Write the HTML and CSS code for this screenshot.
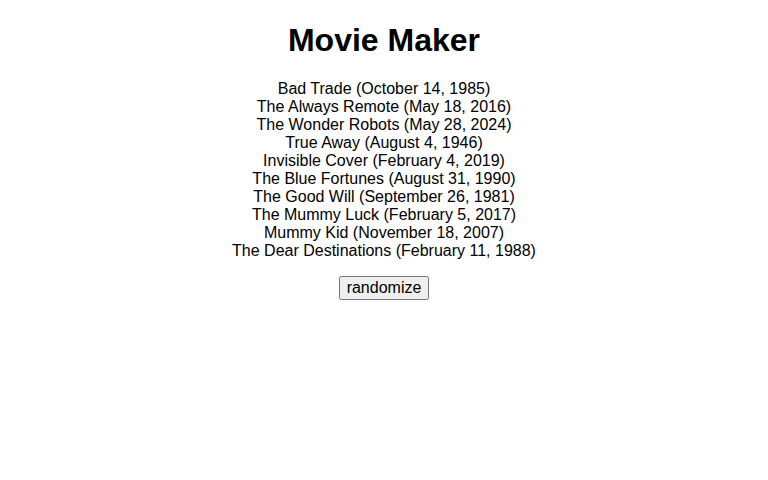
FILE: index.html
```html
<!DOCTYPE html>
<html lang="en">
<head>
    <meta charset="UTF-8">
    <meta name="viewport" content="width=device-width, initial-scale=1.0">
    <title>Movie Maker</title>
    <link rel="stylesheet" href="styles.css">
</head>
<body>
    <h1 class="title">Movie Maker</h1>
    <!-- list of generated movies, one per line -->
    <div class="movies">
        <div class="movie">Bad Trade (October 14, 1985)</div>
        <div class="movie">The Always Remote (May 18, 2016)</div>
        <div class="movie">The Wonder Robots (May 28, 2024)</div>
        <div class="movie">True Away (August 4, 1946)</div>
        <div class="movie">Invisible Cover (February 4, 2019)</div>
        <div class="movie">The Blue Fortunes (August 31, 1990)</div>
        <div class="movie">The Good Will (September 26, 1981)</div>
        <div class="movie">The Mummy Luck (February 5, 2017)</div>
        <div class="movie">Mummy Kid (November 18, 2007)</div>
        <div class="movie">The Dear Destinations (February 11, 1988)</div>
    </div>
    <p class="actions">
        <button class="randomize">randomize</button>
    </p>
    <script src="script.js"></script>
</body>
</html>
```

FILE: styles.css
```css
body{
    margin: 8px;
    font-family: "Liberation Sans", Arial, sans-serif;
    font-size: 16px;
    text-align: center;
    color: #000;
    background-color: #fff;
}
.title{
    font-size: 32px;
    margin: 14px 0 21px;
}
.movies{
    line-height: 18px;
}
.actions{
    margin: 16px 0;
}
.randomize{
    font-family: inherit;
    font-size: 16px;
}
```

FILE: script.js
```js
// pieces used to build movie names
var adjectives = ['Bad', 'Always', 'Wonder', 'True', 'Invisible', 'Blue', 'Good', 'Mummy', 'Dear', 'Lost'];
var nouns = ['Trade', 'Remote', 'Robots', 'Away', 'Cover', 'Fortunes', 'Will', 'Luck', 'Kid', 'Destinations'];
var months = ['January', 'February', 'March', 'April', 'May', 'June', 'July',
    'August', 'September', 'October', 'November', 'December'];

function pick(list){
    return list[Math.floor(Math.random() * list.length)];
}

function makeMovie(){
    var name = (Math.random() < 0.6 ? 'The ' : '') + pick(adjectives) + ' ' + pick(nouns);
    var year = 1940 + Math.floor(Math.random() * 85);
    var day = 1 + Math.floor(Math.random() * 28);
    return name + ' (' + pick(months) + ' ' + day + ', ' + year + ')';
}

document.querySelector('.randomize').onclick = function(){
    var items = document.querySelectorAll('.movie');
    for(var i = 0; i < items.length; i++){
        items[i].textContent = makeMovie();
    }
};
```
